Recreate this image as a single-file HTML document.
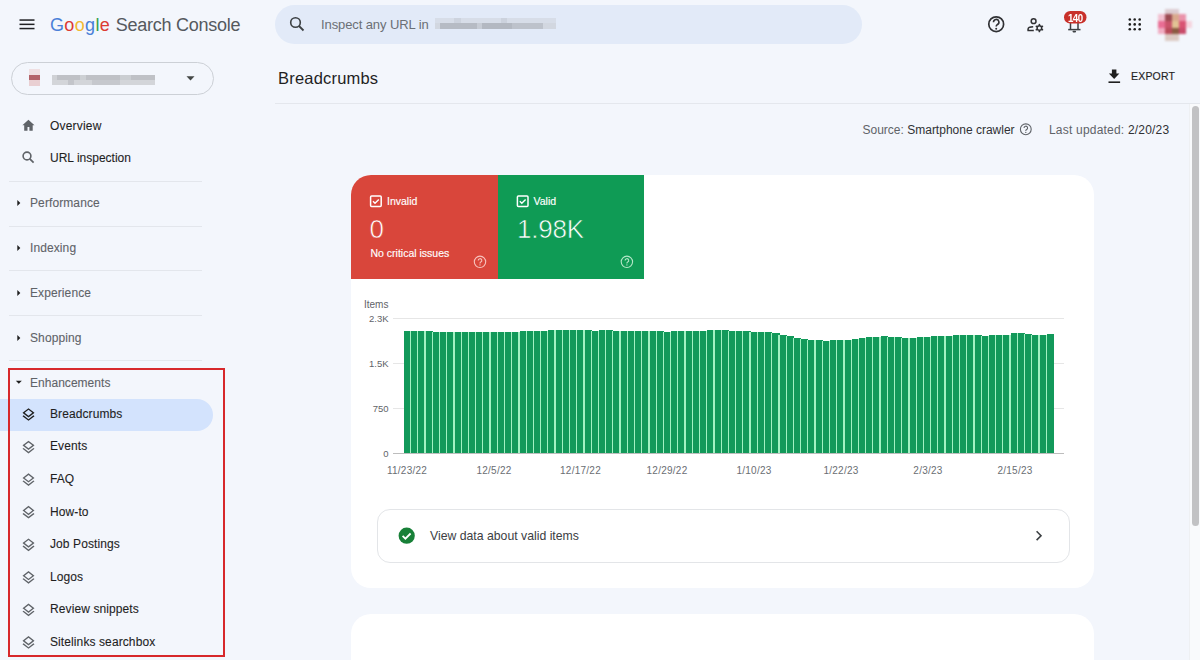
<!DOCTYPE html>
<html><head><meta charset="utf-8">
<style>
*{box-sizing:border-box;margin:0;padding:0}
html,body{width:1200px;height:660px;overflow:hidden}
body{background:#f3f6fc;font-family:"Liberation Sans",sans-serif;position:relative;color:#1f1f1f}
.a{position:absolute;white-space:nowrap}
svg{position:absolute;overflow:visible}
</style></head><body>

<!-- Top bar -->
<svg style="left:0;top:0" width="1" height="1">
  <rect x="19.5" y="19.3" width="15" height="1.5" fill="#202124"/>
  <rect x="19.5" y="23.6" width="15" height="1.5" fill="#202124"/>
  <rect x="19.5" y="27.8" width="15" height="1.5" fill="#202124"/>
</svg>
<div class="a" id="logo" style="left:50px;top:13px;font-size:18px;line-height:24px;letter-spacing:0.35px"><span style="color:#4a80d8">G</span><span style="color:#dc3b33">o</span><span style="color:#f2b933">o</span><span style="color:#4a80d8">g</span><span style="color:#34a04f">l</span><span style="color:#dc3b33">e</span><span style="color:#55595e;letter-spacing:-0.25px;margin-left:0.8px"> Search Console</span></div>

<div class="a" style="left:275px;top:5px;width:587px;height:39px;border-radius:19.5px;background:#e2eaf8"></div>
<svg style="left:0;top:0" width="1" height="1">
  <circle cx="295.5" cy="22.5" r="4.8" fill="none" stroke="#3c4043" stroke-width="1.6"/>
  <line x1="299" y1="26" x2="303.5" y2="30.5" stroke="#3c4043" stroke-width="1.8"/>
</svg>
<div class="a" style="left:321px;top:16.5px;font-size:13px;line-height:16px;color:#6b6f75;letter-spacing:-0.1px">Inspect any URL in</div>
<div class="a" style="left:434.5px;top:17.5px;width:121px;height:12px;filter:blur(0.7px)">
 <div class="a" style="left:0;top:0;width:121px;height:5.5px;background:#d7dde8"></div>
 <div class="a" style="left:0;top:5.5px;width:121px;height:6px;background:#d2d7e0"></div>
 <div class="a" style="left:5.5px;top:5.5px;width:37px;height:6px;background:#b6bbc4"></div>
 <div class="a" style="left:42.5px;top:5.5px;width:5px;height:6px;background:#c7ccd5"></div>
 <div class="a" style="left:47.5px;top:5.5px;width:30px;height:6px;background:#b3b8c1"></div>
 <div class="a" style="left:77.5px;top:5.5px;width:31px;height:6px;background:#bdc2cb"></div>
 <div class="a" style="left:19.5px;top:0;width:7px;height:5.5px;background:#cdd3de"></div>
 <div class="a" style="left:66.5px;top:0;width:6px;height:5.5px;background:#ccd2dd"></div>
</div>

<!-- help -->
<svg style="left:0;top:0" width="1" height="1">
  <circle cx="996.2" cy="24.2" r="7.4" fill="none" stroke="#303134" stroke-width="1.7"/>
  <path d="M993.5 22.2 a2.7 2.7 0 1 1 4 2.3 c-0.9 0.5 -1.3 0.9 -1.3 2" fill="none" stroke="#303134" stroke-width="1.6"/>
  <circle cx="996.2" cy="28.7" r="1" fill="#303134"/>
  <!-- person settings -->
  <circle cx="1033.6" cy="21.2" r="2.4" fill="none" stroke="#303134" stroke-width="1.5"/>
  <path d="M1028.1 30.3 v-1.3 c0-1.3 2.6-2.3 5.1-2.3" fill="none" stroke="#303134" stroke-width="1.5"/>
  <line x1="1027.4" y1="30.5" x2="1033.8" y2="30.5" stroke="#303134" stroke-width="1.5"/>
  <circle cx="1039.4" cy="28" r="2.3" fill="none" stroke="#303134" stroke-width="1.5"/>
  <g fill="#303134">
   <circle cx="1039.4" cy="24.6" r="0.9"/><circle cx="1039.4" cy="31.4" r="0.9"/>
   <circle cx="1036.45" cy="26.3" r="0.9"/><circle cx="1042.35" cy="26.3" r="0.9"/>
   <circle cx="1036.45" cy="29.7" r="0.9"/><circle cx="1042.35" cy="29.7" r="0.9"/>
  </g>
  <!-- bell -->
  <path d="M1070.5 23 v6 M1078 23 v6" stroke="#3c4043" stroke-width="1.5" fill="none"/>
  <line x1="1068.2" y1="29.6" x2="1080.5" y2="29.6" stroke="#3c4043" stroke-width="1.5"/>
  <rect x="1072.5" y="30.8" width="3.6" height="1.6" rx="0.8" fill="#3c4043"/>
  <rect x="1064" y="11" width="22.5" height="12.5" rx="6.25" fill="#c8302a"/>
  <!-- apps -->
  <g fill="#1f1f1f">
   <circle cx="1129.8" cy="19.5" r="1.3"/><circle cx="1134.7" cy="19.5" r="1.3"/><circle cx="1139.7" cy="19.5" r="1.3"/>
   <circle cx="1129.8" cy="24.4" r="1.3"/><circle cx="1134.7" cy="24.4" r="1.3"/><circle cx="1139.7" cy="24.4" r="1.3"/>
   <circle cx="1129.8" cy="29.2" r="1.3"/><circle cx="1134.7" cy="29.2" r="1.3"/><circle cx="1139.7" cy="29.2" r="1.3"/>
  </g>
</svg>
<div class="a" style="left:1064px;top:11.5px;width:22.5px;text-align:center;font-size:10.5px;line-height:12px;font-weight:700;color:#fff;letter-spacing:-0.6px;transform:scaleX(0.92)">140</div>

<!-- avatar pixelated -->
<div class="a" style="left:1156px;top:8px;width:38px;height:36px;filter:blur(1px)">
 <div class="a" style="left:9px;top:1px;width:14px;height:5px;background:#dccbd0"></div>
 <div class="a" style="left:2px;top:6px;width:7px;height:7px;background:#f2bfcf"></div>
 <div class="a" style="left:9px;top:6px;width:7px;height:7px;background:#9c4a52"></div>
 <div class="a" style="left:16px;top:6px;width:7px;height:7px;background:#d9a98c"></div>
 <div class="a" style="left:23px;top:6px;width:7px;height:7px;background:#ea93ab"></div>
 <div class="a" style="left:2px;top:13px;width:7px;height:7px;background:#e96d94"></div>
 <div class="a" style="left:9px;top:13px;width:7px;height:7px;background:#c9536b"></div>
 <div class="a" style="left:16px;top:13px;width:7px;height:7px;background:#e2c394"></div>
 <div class="a" style="left:23px;top:13px;width:7px;height:7px;background:#d95373"></div>
 <div class="a" style="left:30px;top:13px;width:6px;height:7px;background:#f6d4de"></div>
 <div class="a" style="left:2px;top:20px;width:7px;height:6px;background:#f1acc2"></div>
 <div class="a" style="left:9px;top:20px;width:7px;height:6px;background:#b94a5a"></div>
 <div class="a" style="left:16px;top:20px;width:7px;height:6px;background:#8b5b42"></div>
 <div class="a" style="left:23px;top:20px;width:7px;height:6px;background:#c94b6a"></div>
 <div class="a" style="left:9px;top:26px;width:14px;height:7px;background:#dccac3"></div>
</div>

<!-- Sidebar -->
<div class="a" style="left:11px;top:62px;width:203px;height:33px;border:1px solid #ccd0d6;border-radius:17px"></div>
<div class="a" style="left:28.7px;top:68.7px;width:11px;height:17px;filter:blur(0.6px)">
 <div class="a" style="left:0;top:0;width:11px;height:6px;background:#efdfe2"></div>
 <div class="a" style="left:0;top:6px;width:11px;height:5px;background:#b3636a"></div>
 <div class="a" style="left:0;top:11px;width:11px;height:6px;background:#e9cfd2"></div>
</div>
<div class="a" style="left:51.5px;top:74.5px;width:103px;height:11px;filter:blur(0.6px)">
 <div class="a" style="left:0;top:0;width:103px;height:5.3px;background:#bfc1c6"></div>
 <div class="a" style="left:0;top:0;width:5.5px;height:5.3px;background:#cfd1d5"></div>
 <div class="a" style="left:28.5px;top:0;width:6px;height:5.3px;background:#cdd0d4"></div>
 <div class="a" style="left:68.5px;top:0;width:11px;height:5.3px;background:#cbced2"></div>
 <div class="a" style="left:0;top:5.3px;width:103px;height:5.7px;background:#d3d5d9"></div>
 <div class="a" style="left:16.5px;top:5.3px;width:6px;height:5.7px;background:#c3c5ca"></div>
 <div class="a" style="left:40.5px;top:5.3px;width:28px;height:5.7px;background:#c6c8cd"></div>
</div>
<svg style="left:0;top:0" width="1" height="1">
  <path d="M186.5 76.3 h8 l-4 4.2z" fill="#444746"/>
  <!-- home -->
  <path d="M28.4 119.8 l-6 5.4 h1.8 v5.6 h3.3 v-3.8 h1.9 v3.8 h3.3 v-5.6 h1.8z" fill="#5f6368"/>
  <!-- search -->
  <circle cx="27" cy="156" r="3.9" fill="none" stroke="#5f6368" stroke-width="1.6"/>
  <line x1="29.8" y1="158.8" x2="33.6" y2="162.6" stroke="#5f6368" stroke-width="1.7"/>
</svg>
<div class="a" style="left:50px;top:118.8px;font-size:12px;line-height:15px;letter-spacing:0.2px;color:#1f1f1f;-webkit-text-stroke:0.1px #1f1f1f">Overview</div>
<div class="a" style="left:50px;top:151.3px;font-size:12px;line-height:15px;letter-spacing:0.0px;color:#1f1f1f;-webkit-text-stroke:0.1px #1f1f1f">URL inspection</div>

<div class="a" style="left:9px;top:181px;width:193px;height:1px;background:#e3e6ec"></div>
<div class="a" style="left:9px;top:226px;width:193px;height:1px;background:#e3e6ec"></div>
<div class="a" style="left:9px;top:270px;width:193px;height:1px;background:#e3e6ec"></div>
<div class="a" style="left:9px;top:315px;width:193px;height:1px;background:#e3e6ec"></div>
<div class="a" style="left:9px;top:360px;width:193px;height:1px;background:#e3e6ec"></div>

<svg style="left:0;top:0" width="1" height="1">
  <path d="M17.3 200 l3 3 l-3 3z" fill="#1f1f1f"/>
  <path d="M17.3 245 l3 3 l-3 3z" fill="#1f1f1f"/>
  <path d="M17.3 290 l3 3 l-3 3z" fill="#1f1f1f"/>
  <path d="M17.3 335 l3 3 l-3 3z" fill="#1f1f1f"/>
  <path d="M15.8 380.8 h6 l-3 3z" fill="#1f1f1f"/>
</svg>
<div class="a" style="left:30px;top:195.7px;font-size:12px;line-height:15px;letter-spacing:0.1px;color:#5f6368;-webkit-text-stroke:0.1px #5f6368">Performance</div>
<div class="a" style="left:30px;top:240.7px;font-size:12px;line-height:15px;letter-spacing:0.1px;color:#5f6368;-webkit-text-stroke:0.1px #5f6368">Indexing</div>
<div class="a" style="left:30px;top:285.7px;font-size:12px;line-height:15px;letter-spacing:0.1px;color:#5f6368;-webkit-text-stroke:0.1px #5f6368">Experience</div>
<div class="a" style="left:30px;top:330.7px;font-size:12px;line-height:15px;letter-spacing:0.1px;color:#5f6368;-webkit-text-stroke:0.1px #5f6368">Shopping</div>
<div class="a" style="left:30px;top:375.5px;font-size:12px;line-height:15px;letter-spacing:0.03px;color:#5f6368;-webkit-text-stroke:0.1px #5f6368">Enhancements</div>

<div class="a" style="left:0;top:399px;width:213px;height:32px;border-radius:0 16px 16px 0;background:#d3e3fd"></div>

<svg style="left:0;top:0" width="1" height="1"><g transform="translate(20.5,406.80) scale(0.6667)"><path d="M11.99 18.54l-7.37-5.73L3 14.07l9 7 9-7-1.63-1.27-7.38 5.74zM12 16l7.36-5.73L21 9l-9-7-9 7 1.63 1.27L12 16zm0-11.47L17.74 9 12 13.47 6.26 9 12 4.53z" fill="#1f1f1f"/></g></svg><div class="a" style="left:50px;top:406.8px;font-size:12px;line-height:15px;letter-spacing:0.1px;color:#1f1f1f;-webkit-text-stroke:0.1px #1f1f1f">Breadcrumbs</div><svg style="left:0;top:0" width="1" height="1"><g transform="translate(20.5,439.37) scale(0.6667)"><path d="M11.99 18.54l-7.37-5.73L3 14.07l9 7 9-7-1.63-1.27-7.38 5.74zM12 16l7.36-5.73L21 9l-9-7-9 7 1.63 1.27L12 16zm0-11.47L17.74 9 12 13.47 6.26 9 12 4.53z" fill="#5f6368"/></g></svg><div class="a" style="left:50px;top:439.4px;font-size:12px;line-height:15px;letter-spacing:0.1px;color:#1f1f1f;-webkit-text-stroke:0.1px #1f1f1f">Events</div><svg style="left:0;top:0" width="1" height="1"><g transform="translate(20.5,471.94) scale(0.6667)"><path d="M11.99 18.54l-7.37-5.73L3 14.07l9 7 9-7-1.63-1.27-7.38 5.74zM12 16l7.36-5.73L21 9l-9-7-9 7 1.63 1.27L12 16zm0-11.47L17.74 9 12 13.47 6.26 9 12 4.53z" fill="#5f6368"/></g></svg><div class="a" style="left:50px;top:471.9px;font-size:12px;line-height:15px;letter-spacing:0.1px;color:#1f1f1f;-webkit-text-stroke:0.1px #1f1f1f">FAQ</div><svg style="left:0;top:0" width="1" height="1"><g transform="translate(20.5,504.51) scale(0.6667)"><path d="M11.99 18.54l-7.37-5.73L3 14.07l9 7 9-7-1.63-1.27-7.38 5.74zM12 16l7.36-5.73L21 9l-9-7-9 7 1.63 1.27L12 16zm0-11.47L17.74 9 12 13.47 6.26 9 12 4.53z" fill="#5f6368"/></g></svg><div class="a" style="left:50px;top:504.5px;font-size:12px;line-height:15px;letter-spacing:0.1px;color:#1f1f1f;-webkit-text-stroke:0.1px #1f1f1f">How-to</div><svg style="left:0;top:0" width="1" height="1"><g transform="translate(20.5,537.08) scale(0.6667)"><path d="M11.99 18.54l-7.37-5.73L3 14.07l9 7 9-7-1.63-1.27-7.38 5.74zM12 16l7.36-5.73L21 9l-9-7-9 7 1.63 1.27L12 16zm0-11.47L17.74 9 12 13.47 6.26 9 12 4.53z" fill="#5f6368"/></g></svg><div class="a" style="left:50px;top:537.1px;font-size:12px;line-height:15px;letter-spacing:0.1px;color:#1f1f1f;-webkit-text-stroke:0.1px #1f1f1f">Job Postings</div><svg style="left:0;top:0" width="1" height="1"><g transform="translate(20.5,569.65) scale(0.6667)"><path d="M11.99 18.54l-7.37-5.73L3 14.07l9 7 9-7-1.63-1.27-7.38 5.74zM12 16l7.36-5.73L21 9l-9-7-9 7 1.63 1.27L12 16zm0-11.47L17.74 9 12 13.47 6.26 9 12 4.53z" fill="#5f6368"/></g></svg><div class="a" style="left:50px;top:569.6px;font-size:12px;line-height:15px;letter-spacing:0.1px;color:#1f1f1f;-webkit-text-stroke:0.1px #1f1f1f">Logos</div><svg style="left:0;top:0" width="1" height="1"><g transform="translate(20.5,602.22) scale(0.6667)"><path d="M11.99 18.54l-7.37-5.73L3 14.07l9 7 9-7-1.63-1.27-7.38 5.74zM12 16l7.36-5.73L21 9l-9-7-9 7 1.63 1.27L12 16zm0-11.47L17.74 9 12 13.47 6.26 9 12 4.53z" fill="#5f6368"/></g></svg><div class="a" style="left:50px;top:602.2px;font-size:12px;line-height:15px;letter-spacing:0.1px;color:#1f1f1f;-webkit-text-stroke:0.1px #1f1f1f">Review snippets</div><svg style="left:0;top:0" width="1" height="1"><g transform="translate(20.5,634.79) scale(0.6667)"><path d="M11.99 18.54l-7.37-5.73L3 14.07l9 7 9-7-1.63-1.27-7.38 5.74zM12 16l7.36-5.73L21 9l-9-7-9 7 1.63 1.27L12 16zm0-11.47L17.74 9 12 13.47 6.26 9 12 4.53z" fill="#5f6368"/></g></svg><div class="a" style="left:50px;top:634.8px;font-size:12px;line-height:15px;letter-spacing:0.1px;color:#1f1f1f;-webkit-text-stroke:0.1px #1f1f1f">Sitelinks searchbox</div>

<div class="a" style="left:8px;top:367.5px;width:217px;height:289.5px;border:2px solid #d7282b"></div>

<!-- Main header -->
<div class="a" style="left:278px;top:68px;font-size:16.5px;line-height:20px;letter-spacing:0.2px;color:#1f1f1f">Breadcrumbs</div>
<div class="a" style="left:275px;top:102.5px;width:925px;height:1px;background:#e4e7ed"></div>
<svg style="left:0;top:0" width="1" height="1">
  <path d="M1111.9 69.4 h4.5 v4.2 h3 l-5.25 5.5 l-5.25 -5.5 h3z" fill="#1f1f1f"/>
  <rect x="1108.5" y="81.4" width="11.6" height="1.6" fill="#1f1f1f"/>
</svg>
<div class="a" style="left:1131px;top:70px;font-size:10.5px;line-height:13px;letter-spacing:0.2px;color:#1f1f1f;-webkit-text-stroke:0.15px #1f1f1f">EXPORT</div>

<div class="a" style="left:862.5px;top:123px;font-size:12px;line-height:15px;color:#5f6368">Source: <span style="color:#303134">Smartphone crawler</span></div>
<svg style="left:0;top:0" width="1" height="1">
  <circle cx="1025.8" cy="129.3" r="5.4" fill="none" stroke="#5f6368" stroke-width="1.1"/>
  <path d="M1024 128 a1.8 1.8 0 1 1 2.6 1.6 c-0.6 0.35 -0.8 0.6 -0.8 1.3" fill="none" stroke="#5f6368" stroke-width="1.1"/>
  <circle cx="1025.8" cy="132.4" r="0.65" fill="#5f6368"/>
</svg>
<div class="a" style="left:1049px;top:123px;font-size:12px;line-height:15px;letter-spacing:0.2px;color:#5f6368">Last updated: <span style="color:#303134">2/20/23</span></div>

<!-- Card -->
<div class="a" style="left:351px;top:175px;width:743px;height:412.5px;border-radius:20px;background:#fff;overflow:hidden">
  <div class="a" style="left:0;top:0;width:146.5px;height:103.5px;background:#d9463b"></div>
  <div class="a" style="left:146.5px;top:0;width:146.5px;height:103.5px;background:#0f9b55"></div>
</div>
<div class="a" style="left:351px;top:614px;width:743px;height:100px;border-radius:20px;background:#fff"></div>

<svg style="left:0;top:0" width="1" height="1">
  <rect x="370.6" y="196" width="10.6" height="10.6" rx="1" fill="none" stroke="#fff" stroke-width="1.5"/>
  <path d="M373 201.3 l2 2 l3.8 -3.8" fill="none" stroke="#fff" stroke-width="1.4"/>
  <rect x="517.4" y="196" width="10.6" height="10.6" rx="1" fill="none" stroke="#fff" stroke-width="1.5"/>
  <path d="M519.8 201.3 l2 2 l3.8 -3.8" fill="none" stroke="#fff" stroke-width="1.4"/>
  <circle cx="480" cy="261.8" r="5.7" fill="none" stroke="#f7c3bd" stroke-width="1.1"/>
  <path d="M478.2 260.5 a1.8 1.8 0 1 1 2.6 1.6 c-0.6 0.35 -0.8 0.6 -0.8 1.3" fill="none" stroke="#f7c3bd" stroke-width="1.1"/>
  <circle cx="480" cy="264.9" r="0.65" fill="#f7c3bd"/>
  <circle cx="626.9" cy="261.8" r="5.7" fill="none" stroke="#b5e6c8" stroke-width="1.1"/>
  <path d="M625.1 260.5 a1.8 1.8 0 1 1 2.6 1.6 c-0.6 0.35 -0.8 0.6 -0.8 1.3" fill="none" stroke="#b5e6c8" stroke-width="1.1"/>
  <circle cx="626.9" cy="264.9" r="0.65" fill="#b5e6c8"/>
</svg>
<div class="a" style="left:387px;top:195px;font-size:10.5px;line-height:12px;color:#fff;-webkit-text-stroke:0.15px #fff">Invalid</div>
<div class="a" style="left:533.5px;top:195px;font-size:10.5px;line-height:12px;color:#fff;-webkit-text-stroke:0.15px #fff">Valid</div>
<div class="a" style="left:369.5px;top:214px;font-size:26px;line-height:30px;color:#fff;-webkit-text-stroke:0.6px #d9463b">0</div>
<div class="a" style="left:517px;top:214px;font-size:26px;line-height:30px;letter-spacing:-0.2px;color:#fff;-webkit-text-stroke:0.6px #0f9b55">1.98K</div>
<div class="a" style="left:370.5px;top:246.8px;font-size:10.5px;line-height:12px;color:#fff;letter-spacing:0.0px;-webkit-text-stroke:0.15px #fff">No critical issues</div>

<!-- Chart -->
<div class="a" style="left:364px;top:298.5px;font-size:10px;line-height:12px;color:#5f6368">Items</div>
<div class="a" style="left:352px;top:313px;width:36.5px;text-align:right;font-size:9.5px;line-height:12px;color:#5f6368">2.3K</div>
<div class="a" style="left:352px;top:358px;width:36.5px;text-align:right;font-size:9.5px;line-height:12px;color:#5f6368">1.5K</div>
<div class="a" style="left:352px;top:403px;width:36.5px;text-align:right;font-size:9.5px;line-height:12px;color:#5f6368">750</div>
<div class="a" style="left:352px;top:448px;width:36.5px;text-align:right;font-size:9.5px;line-height:12px;color:#5f6368">0</div>
<div class="a" style="left:393px;top:318px;width:671px;height:1px;background:#e6e6e6"></div>
<div class="a" style="left:393px;top:363px;width:671px;height:1px;background:#e6e6e6"></div>
<div class="a" style="left:393px;top:408px;width:671px;height:1px;background:#e6e6e6"></div>
<div class="a" style="left:393px;top:453px;width:671px;height:1px;background:#bdbdbd"></div>
<div class="a" style="left:404.00px;top:330.7px;width:7.22px;height:122.3px;background:#12995a"></div><div class="a" style="left:410.02px;top:330.7px;width:1.4px;height:122.3px;background:#a2f1c2"></div><div class="a" style="left:411.22px;top:330.7px;width:7.22px;height:122.3px;background:#12995a"></div><div class="a" style="left:417.24px;top:330.7px;width:1.4px;height:122.3px;background:#a2f1c2"></div><div class="a" style="left:418.44px;top:330.7px;width:7.22px;height:122.3px;background:#12995a"></div><div class="a" style="left:424.47px;top:330.7px;width:1.4px;height:122.3px;background:#a2f1c2"></div><div class="a" style="left:425.67px;top:330.7px;width:7.22px;height:122.3px;background:#12995a"></div><div class="a" style="left:431.69px;top:331.7px;width:1.4px;height:121.3px;background:#a2f1c2"></div><div class="a" style="left:432.89px;top:331.7px;width:7.22px;height:121.3px;background:#12995a"></div><div class="a" style="left:438.91px;top:331.7px;width:1.4px;height:121.3px;background:#a2f1c2"></div><div class="a" style="left:440.11px;top:331.7px;width:7.22px;height:121.3px;background:#12995a"></div><div class="a" style="left:446.13px;top:331.7px;width:1.4px;height:121.3px;background:#a2f1c2"></div><div class="a" style="left:447.33px;top:331.7px;width:7.22px;height:121.3px;background:#12995a"></div><div class="a" style="left:453.36px;top:331.7px;width:1.4px;height:121.3px;background:#a2f1c2"></div><div class="a" style="left:454.56px;top:331.7px;width:7.22px;height:121.3px;background:#12995a"></div><div class="a" style="left:460.58px;top:332.4px;width:1.4px;height:120.6px;background:#a2f1c2"></div><div class="a" style="left:461.78px;top:332.4px;width:7.22px;height:120.6px;background:#12995a"></div><div class="a" style="left:467.80px;top:332.4px;width:1.4px;height:120.6px;background:#a2f1c2"></div><div class="a" style="left:469.00px;top:332.4px;width:7.22px;height:120.6px;background:#12995a"></div><div class="a" style="left:475.02px;top:332.4px;width:1.4px;height:120.6px;background:#a2f1c2"></div><div class="a" style="left:476.22px;top:331.7px;width:7.22px;height:121.3px;background:#12995a"></div><div class="a" style="left:482.24px;top:331.7px;width:1.4px;height:121.3px;background:#a2f1c2"></div><div class="a" style="left:483.44px;top:331.7px;width:7.22px;height:121.3px;background:#12995a"></div><div class="a" style="left:489.47px;top:332.4px;width:1.4px;height:120.6px;background:#a2f1c2"></div><div class="a" style="left:490.67px;top:332.4px;width:7.22px;height:120.6px;background:#12995a"></div><div class="a" style="left:496.69px;top:332.4px;width:1.4px;height:120.6px;background:#a2f1c2"></div><div class="a" style="left:497.89px;top:332.4px;width:7.22px;height:120.6px;background:#12995a"></div><div class="a" style="left:503.91px;top:332.4px;width:1.4px;height:120.6px;background:#a2f1c2"></div><div class="a" style="left:505.11px;top:332.4px;width:7.22px;height:120.6px;background:#12995a"></div><div class="a" style="left:511.13px;top:332.4px;width:1.4px;height:120.6px;background:#a2f1c2"></div><div class="a" style="left:512.33px;top:332.4px;width:7.22px;height:120.6px;background:#12995a"></div><div class="a" style="left:518.36px;top:332.4px;width:1.4px;height:120.6px;background:#a2f1c2"></div><div class="a" style="left:519.56px;top:330.7px;width:7.22px;height:122.3px;background:#12995a"></div><div class="a" style="left:525.58px;top:330.7px;width:1.4px;height:122.3px;background:#a2f1c2"></div><div class="a" style="left:526.78px;top:330.7px;width:7.22px;height:122.3px;background:#12995a"></div><div class="a" style="left:532.80px;top:330.7px;width:1.4px;height:122.3px;background:#a2f1c2"></div><div class="a" style="left:534.00px;top:330.7px;width:7.22px;height:122.3px;background:#12995a"></div><div class="a" style="left:540.02px;top:330.7px;width:1.4px;height:122.3px;background:#a2f1c2"></div><div class="a" style="left:541.22px;top:330.7px;width:7.22px;height:122.3px;background:#12995a"></div><div class="a" style="left:547.24px;top:330.7px;width:1.4px;height:122.3px;background:#a2f1c2"></div><div class="a" style="left:548.44px;top:330.0px;width:7.22px;height:123.0px;background:#12995a"></div><div class="a" style="left:554.47px;top:330.0px;width:1.4px;height:123.0px;background:#a2f1c2"></div><div class="a" style="left:555.67px;top:330.0px;width:7.22px;height:123.0px;background:#12995a"></div><div class="a" style="left:561.69px;top:330.0px;width:1.4px;height:123.0px;background:#a2f1c2"></div><div class="a" style="left:562.89px;top:330.0px;width:7.22px;height:123.0px;background:#12995a"></div><div class="a" style="left:568.91px;top:330.0px;width:1.4px;height:123.0px;background:#a2f1c2"></div><div class="a" style="left:570.11px;top:330.0px;width:7.22px;height:123.0px;background:#12995a"></div><div class="a" style="left:576.13px;top:330.0px;width:1.4px;height:123.0px;background:#a2f1c2"></div><div class="a" style="left:577.33px;top:330.0px;width:7.22px;height:123.0px;background:#12995a"></div><div class="a" style="left:583.36px;top:330.0px;width:1.4px;height:123.0px;background:#a2f1c2"></div><div class="a" style="left:584.56px;top:330.0px;width:7.22px;height:123.0px;background:#12995a"></div><div class="a" style="left:590.58px;top:331.0px;width:1.4px;height:122.0px;background:#a2f1c2"></div><div class="a" style="left:591.78px;top:331.0px;width:7.22px;height:122.0px;background:#12995a"></div><div class="a" style="left:597.80px;top:331.0px;width:1.4px;height:122.0px;background:#a2f1c2"></div><div class="a" style="left:599.00px;top:330.0px;width:7.22px;height:123.0px;background:#12995a"></div><div class="a" style="left:605.02px;top:330.0px;width:1.4px;height:123.0px;background:#a2f1c2"></div><div class="a" style="left:606.22px;top:330.0px;width:7.22px;height:123.0px;background:#12995a"></div><div class="a" style="left:612.24px;top:330.7px;width:1.4px;height:122.3px;background:#a2f1c2"></div><div class="a" style="left:613.44px;top:330.7px;width:7.22px;height:122.3px;background:#12995a"></div><div class="a" style="left:619.47px;top:330.7px;width:1.4px;height:122.3px;background:#a2f1c2"></div><div class="a" style="left:620.67px;top:330.7px;width:7.22px;height:122.3px;background:#12995a"></div><div class="a" style="left:626.69px;top:330.7px;width:1.4px;height:122.3px;background:#a2f1c2"></div><div class="a" style="left:627.89px;top:330.7px;width:7.22px;height:122.3px;background:#12995a"></div><div class="a" style="left:633.91px;top:330.7px;width:1.4px;height:122.3px;background:#a2f1c2"></div><div class="a" style="left:635.11px;top:330.7px;width:7.22px;height:122.3px;background:#12995a"></div><div class="a" style="left:641.13px;top:330.7px;width:1.4px;height:122.3px;background:#a2f1c2"></div><div class="a" style="left:642.33px;top:330.7px;width:7.22px;height:122.3px;background:#12995a"></div><div class="a" style="left:648.36px;top:330.7px;width:1.4px;height:122.3px;background:#a2f1c2"></div><div class="a" style="left:649.56px;top:330.7px;width:7.22px;height:122.3px;background:#12995a"></div><div class="a" style="left:655.58px;top:330.7px;width:1.4px;height:122.3px;background:#a2f1c2"></div><div class="a" style="left:656.78px;top:330.7px;width:7.22px;height:122.3px;background:#12995a"></div><div class="a" style="left:662.80px;top:332.0px;width:1.4px;height:121.0px;background:#a2f1c2"></div><div class="a" style="left:664.00px;top:332.0px;width:7.22px;height:121.0px;background:#12995a"></div><div class="a" style="left:670.02px;top:332.0px;width:1.4px;height:121.0px;background:#a2f1c2"></div><div class="a" style="left:671.22px;top:330.7px;width:7.22px;height:122.3px;background:#12995a"></div><div class="a" style="left:677.24px;top:330.7px;width:1.4px;height:122.3px;background:#a2f1c2"></div><div class="a" style="left:678.44px;top:330.7px;width:7.22px;height:122.3px;background:#12995a"></div><div class="a" style="left:684.47px;top:330.7px;width:1.4px;height:122.3px;background:#a2f1c2"></div><div class="a" style="left:685.67px;top:330.7px;width:7.22px;height:122.3px;background:#12995a"></div><div class="a" style="left:691.69px;top:330.7px;width:1.4px;height:122.3px;background:#a2f1c2"></div><div class="a" style="left:692.89px;top:330.7px;width:7.22px;height:122.3px;background:#12995a"></div><div class="a" style="left:698.91px;top:331.0px;width:1.4px;height:122.0px;background:#a2f1c2"></div><div class="a" style="left:700.11px;top:331.0px;width:7.22px;height:122.0px;background:#12995a"></div><div class="a" style="left:706.13px;top:331.0px;width:1.4px;height:122.0px;background:#a2f1c2"></div><div class="a" style="left:707.33px;top:330.0px;width:7.22px;height:123.0px;background:#12995a"></div><div class="a" style="left:713.36px;top:330.0px;width:1.4px;height:123.0px;background:#a2f1c2"></div><div class="a" style="left:714.56px;top:330.0px;width:7.22px;height:123.0px;background:#12995a"></div><div class="a" style="left:720.58px;top:330.0px;width:1.4px;height:123.0px;background:#a2f1c2"></div><div class="a" style="left:721.78px;top:330.0px;width:7.22px;height:123.0px;background:#12995a"></div><div class="a" style="left:727.80px;top:330.7px;width:1.4px;height:122.3px;background:#a2f1c2"></div><div class="a" style="left:729.00px;top:330.7px;width:7.22px;height:122.3px;background:#12995a"></div><div class="a" style="left:735.02px;top:330.7px;width:1.4px;height:122.3px;background:#a2f1c2"></div><div class="a" style="left:736.22px;top:330.7px;width:7.22px;height:122.3px;background:#12995a"></div><div class="a" style="left:742.24px;top:330.7px;width:1.4px;height:122.3px;background:#a2f1c2"></div><div class="a" style="left:743.44px;top:330.7px;width:7.22px;height:122.3px;background:#12995a"></div><div class="a" style="left:749.47px;top:331.7px;width:1.4px;height:121.3px;background:#a2f1c2"></div><div class="a" style="left:750.67px;top:331.7px;width:7.22px;height:121.3px;background:#12995a"></div><div class="a" style="left:756.69px;top:331.7px;width:1.4px;height:121.3px;background:#a2f1c2"></div><div class="a" style="left:757.89px;top:331.7px;width:7.22px;height:121.3px;background:#12995a"></div><div class="a" style="left:763.91px;top:331.7px;width:1.4px;height:121.3px;background:#a2f1c2"></div><div class="a" style="left:765.11px;top:331.7px;width:7.22px;height:121.3px;background:#12995a"></div><div class="a" style="left:771.13px;top:333.3px;width:1.4px;height:119.7px;background:#a2f1c2"></div><div class="a" style="left:772.33px;top:333.3px;width:7.22px;height:119.7px;background:#12995a"></div><div class="a" style="left:778.36px;top:335.3px;width:1.4px;height:117.7px;background:#a2f1c2"></div><div class="a" style="left:779.56px;top:335.3px;width:7.22px;height:117.7px;background:#12995a"></div><div class="a" style="left:785.58px;top:336.4px;width:1.4px;height:116.6px;background:#a2f1c2"></div><div class="a" style="left:786.78px;top:336.4px;width:7.22px;height:116.6px;background:#12995a"></div><div class="a" style="left:792.80px;top:338.0px;width:1.4px;height:115.0px;background:#a2f1c2"></div><div class="a" style="left:794.00px;top:338.0px;width:7.22px;height:115.0px;background:#12995a"></div><div class="a" style="left:800.02px;top:339.0px;width:1.4px;height:114.0px;background:#a2f1c2"></div><div class="a" style="left:801.22px;top:339.0px;width:7.22px;height:114.0px;background:#12995a"></div><div class="a" style="left:807.24px;top:339.7px;width:1.4px;height:113.3px;background:#a2f1c2"></div><div class="a" style="left:808.44px;top:339.7px;width:7.22px;height:113.3px;background:#12995a"></div><div class="a" style="left:814.47px;top:339.7px;width:1.4px;height:113.3px;background:#a2f1c2"></div><div class="a" style="left:815.67px;top:339.7px;width:7.22px;height:113.3px;background:#12995a"></div><div class="a" style="left:821.69px;top:340.7px;width:1.4px;height:112.3px;background:#a2f1c2"></div><div class="a" style="left:822.89px;top:340.7px;width:7.22px;height:112.3px;background:#12995a"></div><div class="a" style="left:828.91px;top:340.7px;width:1.4px;height:112.3px;background:#a2f1c2"></div><div class="a" style="left:830.11px;top:339.7px;width:7.22px;height:113.3px;background:#12995a"></div><div class="a" style="left:836.13px;top:339.7px;width:1.4px;height:113.3px;background:#a2f1c2"></div><div class="a" style="left:837.33px;top:339.7px;width:7.22px;height:113.3px;background:#12995a"></div><div class="a" style="left:843.36px;top:339.7px;width:1.4px;height:113.3px;background:#a2f1c2"></div><div class="a" style="left:844.56px;top:339.7px;width:7.22px;height:113.3px;background:#12995a"></div><div class="a" style="left:850.58px;top:339.7px;width:1.4px;height:113.3px;background:#a2f1c2"></div><div class="a" style="left:851.78px;top:339.0px;width:7.22px;height:114.0px;background:#12995a"></div><div class="a" style="left:857.80px;top:339.0px;width:1.4px;height:114.0px;background:#a2f1c2"></div><div class="a" style="left:859.00px;top:338.0px;width:7.22px;height:115.0px;background:#12995a"></div><div class="a" style="left:865.02px;top:338.0px;width:1.4px;height:115.0px;background:#a2f1c2"></div><div class="a" style="left:866.22px;top:337.0px;width:7.22px;height:116.0px;background:#12995a"></div><div class="a" style="left:872.24px;top:337.0px;width:1.4px;height:116.0px;background:#a2f1c2"></div><div class="a" style="left:873.44px;top:337.0px;width:7.22px;height:116.0px;background:#12995a"></div><div class="a" style="left:879.47px;top:337.0px;width:1.4px;height:116.0px;background:#a2f1c2"></div><div class="a" style="left:880.67px;top:336.3px;width:7.22px;height:116.7px;background:#12995a"></div><div class="a" style="left:886.69px;top:337.0px;width:1.4px;height:116.0px;background:#a2f1c2"></div><div class="a" style="left:887.89px;top:337.0px;width:7.22px;height:116.0px;background:#12995a"></div><div class="a" style="left:893.91px;top:337.0px;width:1.4px;height:116.0px;background:#a2f1c2"></div><div class="a" style="left:895.11px;top:337.0px;width:7.22px;height:116.0px;background:#12995a"></div><div class="a" style="left:901.13px;top:338.0px;width:1.4px;height:115.0px;background:#a2f1c2"></div><div class="a" style="left:902.33px;top:338.0px;width:7.22px;height:115.0px;background:#12995a"></div><div class="a" style="left:908.36px;top:338.0px;width:1.4px;height:115.0px;background:#a2f1c2"></div><div class="a" style="left:909.56px;top:338.0px;width:7.22px;height:115.0px;background:#12995a"></div><div class="a" style="left:915.58px;top:338.0px;width:1.4px;height:115.0px;background:#a2f1c2"></div><div class="a" style="left:916.78px;top:337.0px;width:7.22px;height:116.0px;background:#12995a"></div><div class="a" style="left:922.80px;top:337.0px;width:1.4px;height:116.0px;background:#a2f1c2"></div><div class="a" style="left:924.00px;top:337.0px;width:7.22px;height:116.0px;background:#12995a"></div><div class="a" style="left:930.02px;top:337.0px;width:1.4px;height:116.0px;background:#a2f1c2"></div><div class="a" style="left:931.22px;top:336.3px;width:7.22px;height:116.7px;background:#12995a"></div><div class="a" style="left:937.24px;top:336.3px;width:1.4px;height:116.7px;background:#a2f1c2"></div><div class="a" style="left:938.44px;top:336.3px;width:7.22px;height:116.7px;background:#12995a"></div><div class="a" style="left:944.47px;top:336.3px;width:1.4px;height:116.7px;background:#a2f1c2"></div><div class="a" style="left:945.67px;top:335.6px;width:7.22px;height:117.4px;background:#12995a"></div><div class="a" style="left:951.69px;top:335.6px;width:1.4px;height:117.4px;background:#a2f1c2"></div><div class="a" style="left:952.89px;top:335.0px;width:7.22px;height:118.0px;background:#12995a"></div><div class="a" style="left:958.91px;top:335.0px;width:1.4px;height:118.0px;background:#a2f1c2"></div><div class="a" style="left:960.11px;top:335.0px;width:7.22px;height:118.0px;background:#12995a"></div><div class="a" style="left:966.13px;top:335.0px;width:1.4px;height:118.0px;background:#a2f1c2"></div><div class="a" style="left:967.33px;top:335.0px;width:7.22px;height:118.0px;background:#12995a"></div><div class="a" style="left:973.36px;top:335.0px;width:1.4px;height:118.0px;background:#a2f1c2"></div><div class="a" style="left:974.56px;top:335.0px;width:7.22px;height:118.0px;background:#12995a"></div><div class="a" style="left:980.58px;top:335.7px;width:1.4px;height:117.3px;background:#a2f1c2"></div><div class="a" style="left:981.78px;top:335.7px;width:7.22px;height:117.3px;background:#12995a"></div><div class="a" style="left:987.80px;top:335.7px;width:1.4px;height:117.3px;background:#a2f1c2"></div><div class="a" style="left:989.00px;top:335.0px;width:7.22px;height:118.0px;background:#12995a"></div><div class="a" style="left:995.02px;top:335.0px;width:1.4px;height:118.0px;background:#a2f1c2"></div><div class="a" style="left:996.22px;top:335.0px;width:7.22px;height:118.0px;background:#12995a"></div><div class="a" style="left:1002.24px;top:335.0px;width:1.4px;height:118.0px;background:#a2f1c2"></div><div class="a" style="left:1003.44px;top:335.0px;width:7.22px;height:118.0px;background:#12995a"></div><div class="a" style="left:1009.47px;top:335.0px;width:1.4px;height:118.0px;background:#a2f1c2"></div><div class="a" style="left:1010.67px;top:333.0px;width:7.22px;height:120.0px;background:#12995a"></div><div class="a" style="left:1016.69px;top:333.0px;width:1.4px;height:120.0px;background:#a2f1c2"></div><div class="a" style="left:1017.89px;top:333.0px;width:7.22px;height:120.0px;background:#12995a"></div><div class="a" style="left:1023.91px;top:334.0px;width:1.4px;height:119.0px;background:#a2f1c2"></div><div class="a" style="left:1025.11px;top:334.0px;width:7.22px;height:119.0px;background:#12995a"></div><div class="a" style="left:1031.13px;top:335.0px;width:1.4px;height:118.0px;background:#a2f1c2"></div><div class="a" style="left:1032.33px;top:335.0px;width:7.22px;height:118.0px;background:#12995a"></div><div class="a" style="left:1038.36px;top:335.0px;width:1.4px;height:118.0px;background:#a2f1c2"></div><div class="a" style="left:1039.56px;top:335.0px;width:7.22px;height:118.0px;background:#12995a"></div><div class="a" style="left:1045.58px;top:335.0px;width:1.4px;height:118.0px;background:#a2f1c2"></div><div class="a" style="left:1046.78px;top:334.0px;width:7.22px;height:119.0px;background:#12995a"></div>
<div class="a" style="left:377px;top:465px;width:60px;text-align:center;font-size:10px;line-height:12px;letter-spacing:0.25px;color:#6a6e73">11/23/22</div><div class="a" style="left:464px;top:465px;width:60px;text-align:center;font-size:10px;line-height:12px;letter-spacing:0.25px;color:#6a6e73">12/5/22</div><div class="a" style="left:550.5px;top:465px;width:60px;text-align:center;font-size:10px;line-height:12px;letter-spacing:0.25px;color:#6a6e73">12/17/22</div><div class="a" style="left:637px;top:465px;width:60px;text-align:center;font-size:10px;line-height:12px;letter-spacing:0.25px;color:#6a6e73">12/29/22</div><div class="a" style="left:724px;top:465px;width:60px;text-align:center;font-size:10px;line-height:12px;letter-spacing:0.25px;color:#6a6e73">1/10/23</div><div class="a" style="left:811px;top:465px;width:60px;text-align:center;font-size:10px;line-height:12px;letter-spacing:0.25px;color:#6a6e73">1/22/23</div><div class="a" style="left:898px;top:465px;width:60px;text-align:center;font-size:10px;line-height:12px;letter-spacing:0.25px;color:#6a6e73">2/3/23</div><div class="a" style="left:985px;top:465px;width:60px;text-align:center;font-size:10px;line-height:12px;letter-spacing:0.25px;color:#6a6e73">2/15/23</div>

<!-- Row -->
<div class="a" style="left:377px;top:509px;width:693px;height:54px;border:1px solid #e3e5e8;border-radius:13px"></div>
<svg style="left:0;top:0" width="1" height="1">
  <circle cx="406.7" cy="535.7" r="8.1" fill="#188038"/>
  <path d="M402.6 535.9 l2.8 2.8 l5.2 -5.2" fill="none" stroke="#fff" stroke-width="1.8"/>
  <path d="M1036.6 531.3 l4.4 4.4 l-4.4 4.4" fill="none" stroke="#3c4043" stroke-width="1.6"/>
</svg>
<div class="a" style="left:430px;top:528.7px;font-size:12.25px;line-height:15px;color:#3c4043">View data about valid items</div>

<!-- scrollbar -->
<div class="a" style="left:1189px;top:103.5px;width:11px;height:557px;background:#f9fafc;border-left:1px solid #eef0f3"></div>
<div class="a" style="left:1192px;top:106px;width:7px;height:420px;border-radius:3.5px;background:#c2c2c4"></div>

</body></html>
